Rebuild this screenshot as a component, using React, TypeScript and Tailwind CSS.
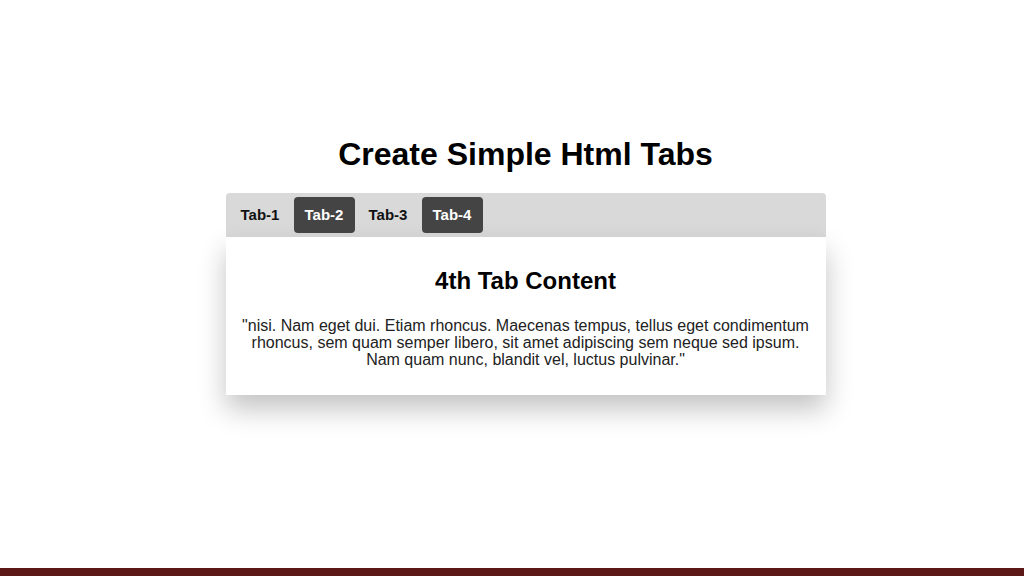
import { useState } from "react";

const tabs = [
  { id: 1, label: "Tab-1", title: "1st Tab Content" },
  { id: 2, label: "Tab-2", title: "2nd Tab Content" },
  { id: 3, label: "Tab-3", title: "3rd Tab Content" },
  { id: 4, label: "Tab-4", title: "4th Tab Content" },
];

const body =
  '"nisi. Nam eget dui. Etiam rhoncus. Maecenas tempus, tellus eget condimentum rhoncus, sem quam semper libero, sit amet adipiscing sem neque sed ipsum. Nam quam nunc, blandit vel, luctus pulvinar."';

export default function App() {
  const [active, setActive] = useState(4);
  const current = tabs.find((t) => t.id === active)!;

  return (
    <div className="flex h-[576px] w-[1024px] flex-col bg-white font-['Liberation_Sans',Arial,sans-serif] text-black">
      <main className="flex flex-1 flex-col items-center pl-[27px] pt-[133px]">
        <h1 className="text-[32px] font-bold leading-[42px]">Create Simple Html Tabs</h1>

        <div className="mt-[18px] w-[600px]">
          <div className="flex h-[44px] items-center gap-[3px] rounded-t-[4px] bg-[#d9d9d9] px-[4px]">
            {tabs.map((t) => (
              <button
                key={t.id}
                type="button"
                onClick={() => setActive(t.id)}
                className={
                  t.id === 2 || t.id === active
                    ? "h-[36px] w-[61px] rounded-[4px] bg-[#444444] text-[15px] font-bold text-white"
                    : "h-[36px] w-[61px] rounded-[4px] text-[15px] font-bold text-[#111]"
                }
              >
                {t.label}
              </button>
            ))}
          </div>

          <section className="flex h-[158px] flex-col items-center bg-white px-[14px] pt-[29px] text-center shadow-[0_14px_26px_rgba(0,0,0,0.24)]">
            <h2 className="text-[24px] font-bold leading-[30px]">{current.title}</h2>
            <p className="mt-[21px] text-[16px] leading-[17px] text-[#222]">{body}</p>
          </section>
        </div>
      </main>

      <div className="h-[8px] bg-[#5c1717]" />
    </div>
  );
}
